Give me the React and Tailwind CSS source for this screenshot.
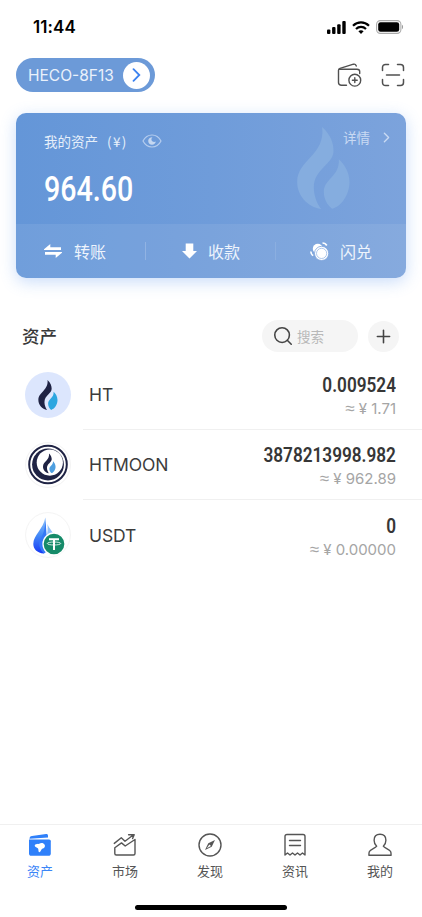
import React, { useState } from 'react';
import { ChevronRight, Plus, Search } from 'lucide-react';

const assets = [
  { id: 1, symbol: 'HT', amount: '0.009524', value: '1.71' },
  { id: 2, symbol: 'HTMOON', amount: '3878213998.982', value: '962.89' },
  { id: 3, symbol: 'USDT', amount: '0', value: '0.00000' }
];

const Flame = ({ className, left, right }) => (
  <svg viewBox="0 0 158 246" className={className}>
    <path fill={left} d="M75 0C102 25 109 50 109 72C109 112 50 125 50 182C50 207 60 230 72 246C30 240 0 205 0 165C0 98 85 85 75 0Z" />
    <path fill={right} d="M125 97C140 110 157 135 157 165C157 205 130 240 105 245C90 235 80 215 80 195C80 155 128 150 125 97Z" />
  </svg>
);

const StatusBar = () => (
  <div className="flex h-[54px] shrink-0 items-center justify-between pl-[33px] pr-[18px]">
    <span className="font-['Inter','Liberation_Sans',sans-serif] text-[17px] font-semibold leading-none tracking-[0.1px] text-black">11:44</span>
    <div className="flex items-center gap-[6px]">
      <svg width="19" height="13" viewBox="0 0 19 13">
        <rect x="0" y="8.5" width="3.4" height="4.5" rx="1" />
        <rect x="5.1" y="6" width="3.4" height="7" rx="1" />
        <rect x="10.2" y="3.2" width="3.4" height="9.8" rx="1" />
        <rect x="15.3" y="0" width="3.4" height="13" rx="1" />
      </svg>
      <svg width="18" height="13" viewBox="0 0 18 13" fill="none" stroke="#000" strokeWidth="2.2">
        <path d="M1 4.8C5.6 0.2 12.4 0.2 17 4.8" />
        <path d="M4 8C6.9 5.2 11.1 5.2 14 8" />
        <path d="M9 13L6.4 10.3C7.9 8.9 10.1 8.9 11.6 10.3Z" fill="#000" stroke="none" />
      </svg>
      <svg width="28" height="14" viewBox="0 0 28 14">
        <rect x="0.6" y="0.6" width="24.3" height="12.8" rx="3.8" fill="none" stroke="#aaa" strokeWidth="1.1" />
        <rect x="2.2" y="2.2" width="21" height="9.6" rx="2.3" />
        <path d="M26 4.8C27.4 5.4 27.4 8.6 26 9.2Z" fill="#999" />
      </svg>
    </div>
  </div>
);

const Header = () => (
  <div className="mt-[4px] flex h-[34px] shrink-0 items-center justify-between pl-4 pr-[17px]">
    <button className="flex h-[34px] w-[139px] items-center justify-between rounded-full bg-[#6c9ad8] pl-3 pr-[5px] text-white">
      <span className="whitespace-nowrap pt-px font-['Inter','Liberation_Sans',sans-serif] text-[15.5px] text-[#eaf1fb]">HECO-8F13</span>
      <span className="flex h-[27px] w-[27px] items-center justify-center rounded-full bg-white">
        <svg width="9" height="14" viewBox="0 0 9 14" fill="none" stroke="#3b82f0" strokeWidth="1.8" strokeLinecap="round">
          <path d="M1.5 1.2L7.3 7L1.5 12.8" />
        </svg>
      </span>
    </button>
    <div className="flex items-center gap-[19px]">
      <svg width="25" height="24" viewBox="0 0 25 24" fill="none" stroke="#505050" strokeWidth="1.4" strokeLinecap="round" strokeLinejoin="round">
        <path d="M9.5 22.3H4.4C2.6 22.3 1.5 21.2 1.5 19.5V7.2C1.5 6.2 2 5.6 3 5.3L16.5 1.2C17.8 0.9 18.8 1.6 19.3 3" />
        <path d="M2.2 6.2H20C21.6 6.2 22.7 7.2 22.7 8.6V10.5" />
        <circle cx="17.8" cy="17.2" r="5.9" />
        <path d="M17.8 14.8V19.6M15.4 17.2H20.2" />
      </svg>
      <svg width="24" height="24" viewBox="0 0 24 24" fill="none" stroke="#505050" strokeWidth="1.5" strokeLinecap="round">
        <path d="M1.5 7.5V4.5C1.5 2.7 2.7 1.5 4.5 1.5H7.5M16.5 1.5H19.5C21.3 1.5 22.5 2.7 22.5 4.5V7.5M22.5 16.5V19.5C22.5 21.3 21.3 22.5 19.5 22.5H16.5M7.5 22.5H4.5C2.7 22.5 1.5 21.3 1.5 19.5V16.5M5.5 12H18.5" />
      </svg>
    </div>
  </div>
);

const BalanceCard = () => (
  <div className="relative mx-4 mt-[21px] h-[165px] shrink-0 rounded-[10px] bg-gradient-to-r from-[#6496d8] via-[#6f9cda] to-[#7ca3dc] text-white shadow-[0_4px_16px_rgba(90,150,240,0.32)]">
    <Flame className="absolute left-[281px] top-[14px] h-[82px] w-[53px]" left="#85addf" right="#85addf" />
    <div className="flex h-[111px] justify-between pl-[28px] pr-[11px]">
      <div className="pt-[18px]">
        <div className="flex h-[20px] items-center">
          <span className="whitespace-nowrap text-[13.5px] text-[#e6effa]">我的资产</span>
          <span className="ml-[9px] whitespace-nowrap text-[13.5px] tracking-[1.4px] text-[#e6effa]">(¥)</span>
          <svg className="ml-[14px]" width="20" height="14" viewBox="0 0 20 14" fill="none" stroke="#b5cdee" strokeWidth="1.2">
            <path d="M1 7C5.2-1 14.8-1 19 7C14.8 15 5.2 15 1 7Z" />
            <path d="M10.5 3.2C8 3.2 6.2 4.9 6.2 7S8 10.8 10 10.8C12 10.8 13.6 9.4 13.8 7.6C12 8.6 9.4 7.6 9.4 5.6C9.4 4.6 9.8 3.8 10.5 3.2Z" fill="#c4d7f1" stroke="none" />
          </svg>
        </div>
        <div className="mt-[19px] origin-left scale-x-[0.83] whitespace-nowrap font-['Roboto',sans-serif] text-[34.5px] font-medium leading-[38px]">964.60</div>
      </div>
      <div className="mt-[14px] flex h-[20px] items-center gap-[8px] text-[#c9daf3]">
        <span className="whitespace-nowrap text-[13.5px]">详情</span>
        <ChevronRight className="h-[19px] w-[17px]" strokeWidth={1.9} />
      </div>
    </div>
    <div className="flex h-[54px] items-center rounded-b-[10px] bg-white/[0.08] text-[16px] text-[#eef4fc]">
      <div className="flex w-[129px] items-center gap-[12px] pl-[28px]">
        <svg width="18" height="14" viewBox="0 0 18 14" fill="#fff">
          <path d="M6.3 0L0 5.3V6H17V3.3H6.3Z" />
          <path d="M11.7 14L18 8.7V8H1V10.7H11.7Z" />
        </svg>
        <span>转账</span>
      </div>
      <div className="h-[18px] w-px bg-white/20" />
      <div className="flex w-[129px] items-center gap-[11px] pl-[36px]">
        <svg width="15" height="16" viewBox="0 0 15 16" fill="#fff">
          <path d="M3.7 0.5H11.3V8H15L7.5 15.5L0 8H3.7Z" />
        </svg>
        <span>收款</span>
      </div>
      <div className="h-[18px] w-px bg-white/10" />
      <div className="flex items-center gap-[11px] pl-[34px]">
        <svg width="19" height="19" viewBox="0 0 19 19" fill="none">
          <circle cx="7.8" cy="6.8" r="5" fill="#fff" />
          <circle cx="11.6" cy="11.4" r="7.1" fill="#fff" stroke="#7ba2dc" strokeWidth="0.8" />
          <circle cx="11.6" cy="11.4" r="5.1" stroke="#8eb0e2" strokeWidth="0.7" />
          <path d="M0.8 9.5C0.9 11.4 1.7 12.7 3.2 13.6M12.5 1C14.5 1 16 2 16.8 3.5" stroke="#fff" strokeWidth="1.6" />
        </svg>
        <span>闪兑</span>
      </div>
    </div>
  </div>
);

const TokenIcon = ({ symbol }) => {
  if (symbol === 'HT') {
    return (
      <div className="flex h-[46px] w-[46px] items-center justify-center rounded-full bg-[#dce6fd]">
        <Flame className="h-[30px] w-[20px]" left="#1f2344" right="#2ca6e0" />
      </div>
    );
  }
  if (symbol === 'HTMOON') {
    return (
      <svg width="46" height="46" viewBox="0 0 46 46">
        <circle cx="23" cy="23" r="22.4" fill="#fff" stroke="#f2f2f2" />
        <circle cx="23" cy="22.5" r="18.8" fill="#fff" stroke="#1f2344" strokeWidth="2" />
        <circle cx="23" cy="22.5" r="15.9" fill="#1f2344" />
        <circle cx="24.8" cy="20.6" r="13.1" fill="#fff" />
        <g transform="translate(18 11.5) scale(0.08)">
          <path fill="#1f2344" d="M75 0C102 25 109 50 109 72C109 112 50 125 50 182C50 207 60 230 72 246C30 240 0 205 0 165C0 98 85 85 75 0Z" />
          <path fill="#4e9fe0" d="M125 97C140 110 157 135 157 165C157 205 130 240 105 245C90 235 80 215 80 195C80 155 128 150 125 97Z" />
        </g>
      </svg>
    );
  }
  return (
    <svg width="46" height="46" viewBox="0 0 46 46">
      <defs>
        <linearGradient id="drop" x1="0" y1="0" x2="0" y2="1">
          <stop offset="0" stopColor="#8fc4fb" />
          <stop offset="0.5" stopColor="#4389f7" />
          <stop offset="1" stopColor="#1638f5" />
        </linearGradient>
      </defs>
      <circle cx="23" cy="23" r="22.4" fill="#fff" stroke="#f4f4f4" />
      <path d="M20.3 5.5C18.5 17 8.3 23 8.3 32C8.3 37 12 41 19 41.5L21 24Z" fill="url(#drop)" />
      <path d="M20.3 5.5C20.5 15 19 21 16 26C13 31 14 37 19 41.5L24 38L21.5 22Z" fill="#3478f6" />
      <path d="M22.5 12C24 17 29 20 30 26L21 34C20 28 23.5 22 22.5 12Z" fill="#91c0fa" />
      <circle cx="29" cy="32" r="11" fill="#168b69" stroke="#fff" strokeWidth="1.3" />
      <path d="M24 26.3H34V28.3H30V38H28V28.3H24Z" fill="#fff" />
      <ellipse cx="29" cy="31.5" rx="6.7" ry="1.5" fill="none" stroke="#fff" strokeWidth="0.8" />
    </svg>
  );
};

const AssetRow = ({ asset, last }) => (
  <div className="flex h-[70px] items-center pl-[25px]">
    <TokenIcon symbol={asset.symbol} />
    <div className={`ml-[12px] flex h-full flex-1 items-center justify-between pl-[6px] pr-[26px] ${last ? '' : 'border-b border-[#f0f0f0]'}`}>
      <span className="pt-[2px] font-['Inter','Liberation_Sans',sans-serif] text-[17.5px] tracking-[-0.1px] text-[#3c3c3c]">{asset.symbol}</span>
      <div className="flex flex-col items-end whitespace-nowrap pt-[4px]">
        <span className="origin-right scale-x-[0.818] font-['Roboto',sans-serif] text-[21px] font-semibold leading-[25px] text-[#363636]">{asset.amount}</span>
        <span className="font-['Inter','Liberation_Sans',sans-serif] text-[15px] leading-[22px] text-[#a5a5a5]">
          <span className="font-['Liberation_Sans',sans-serif] text-[17px] leading-none">≈</span> ¥ {asset.value}
        </span>
      </div>
    </div>
  </div>
);

const tabs = [
  {
    label: '资产',
    icon: (
      <>
        <path d="M1.5 5.7C1.5 4 2.4 3.1 4 2.9L18 1C19.2 0.8 20 1.5 20 2.7V4.4Z" fill="#2f80fa" stroke="none" />
        <path d="M1 6.4H21C22.1 6.4 22.8 7.1 22.8 8.2V20.5C22.8 21.9 21.9 22.8 20.5 22.8H3.3C1.9 22.8 1 21.9 1 20.5Z" fill="#2f80fa" stroke="none" />
        <path d="M7 11.8C8 10.6 10.2 11.3 11.2 10.7C13 9.4 15.7 9.7 16.5 11.5C17.7 13.5 16.3 15.3 14.2 15.8C13 16.3 13 19 11.5 19.2C10 19.2 10.8 16.6 10 15.5C9 14.6 5.8 13.6 7 11.8Z" fill="#fff" stroke="none" />
      </>
    )
  },
  {
    label: '市场',
    icon: (
      <>
        <path d="M1.3 10.4L8.3 4.8L12 8.2L20.5 1.8M15.6 1.7H21.2L19.6 5.6" />
        <path d="M1.8 14.7L8.5 9.9L12.2 13L22 6.5V20.5C22 21.6 21.6 22 20.5 22H3.3C2.2 22 1.8 21.6 1.8 20.5Z" />
      </>
    )
  },
  {
    label: '发现',
    icon: (
      <>
        <circle cx="12" cy="12" r="11" />
        <path d="M17 7L13.7 13.7L7 17L10.3 10.3Z" fill="#555" stroke="none" />
        <path d="M11.4 11.4L13 13L8.7 15.3Z" fill="#fff" stroke="none" />
      </>
    )
  },
  {
    label: '资讯',
    icon: (
      <path d="M2 22V3.5C2 2.2 2.7 1.5 4 1.5H20C21.3 1.5 22 2.2 22 3.5V22L19.5 20L17 22L14.5 20L12 22L9.5 20L7 22L4.5 20ZM6.5 7.5H17.5M6.5 12.5H17.5" />
    )
  },
  {
    label: '我的',
    icon: (
      <path d="M8.7 13.2C6.8 11.6 6.1 9.5 6.1 7.2C6.1 3.7 8.4 1.3 12 1.3S17.9 3.7 17.9 7.2C17.9 9.5 17.2 11.6 15.3 13.2C16.8 15.2 21.4 16.3 22.6 18.5C23.1 19.5 23.1 21 23.1 22.3H0.9C0.9 21 0.9 19.5 1.4 18.5C2.6 16.3 7.2 15.2 8.7 13.2Z" />
    )
  }
];

const App = () => {
  const [activeTab, setActiveTab] = useState('资产');

  return (
    <div className="flex h-[917px] w-[422px] flex-col overflow-hidden bg-white font-['Noto_Sans_CJK_SC',sans-serif]">
      <StatusBar />
      <Header />
      <BalanceCard />

      {/* Asset list header */}
      <div className="mt-[42px] flex h-[32px] shrink-0 items-center pl-[22px] pr-[23px]">
        <h2 className="flex-1 text-[17.5px] font-medium text-[#383838]">资产</h2>
        <div className="flex h-[32px] w-[96px] items-center gap-[3px] rounded-full bg-[#f5f5f5] pl-[10px]">
          <Search className="h-[22px] w-[22px] text-[#444]" strokeWidth={1.7} />
          <span className="text-[13.5px] text-[#b8b8b8]">搜索</span>
        </div>
        <button className="ml-[10px] flex h-[31px] w-[31px] items-center justify-center rounded-full bg-[#f5f5f5]">
          <Plus className="h-[21px] w-[21px] text-[#444]" strokeWidth={1.8} />
        </button>
      </div>

      <div className="mt-[8px] flex-1">
        {assets.map((asset, i) => (
          <AssetRow key={asset.id} asset={asset} last={i === assets.length - 1} />
        ))}
      </div>

      {/* Bottom navigation */}
      <div className="h-[93px] shrink-0 border-t border-[#f0f0f0]">
        <div className="flex justify-between pl-3 pr-[14px] pt-[8px]">
          {tabs.map((tab) => (
            <button key={tab.label} onClick={() => setActiveTab(tab.label)} className="flex w-[56px] flex-col items-center">
              <svg width="24" height="24" viewBox="0 0 24 24" fill="none" stroke="#555" strokeWidth="1.4" strokeLinecap="round" strokeLinejoin="round">
                {tab.icon}
              </svg>
              <span className={`mt-[4px] text-[13px] leading-[20px] ${activeTab === tab.label ? 'text-[#3b86f7]' : 'text-[#555]'}`}>
                {tab.label}
              </span>
            </button>
          ))}
        </div>
        <div className="mx-auto mt-[24px] h-[5px] w-[152px] rounded-full bg-black" />
      </div>
    </div>
  );
};

export default App;
